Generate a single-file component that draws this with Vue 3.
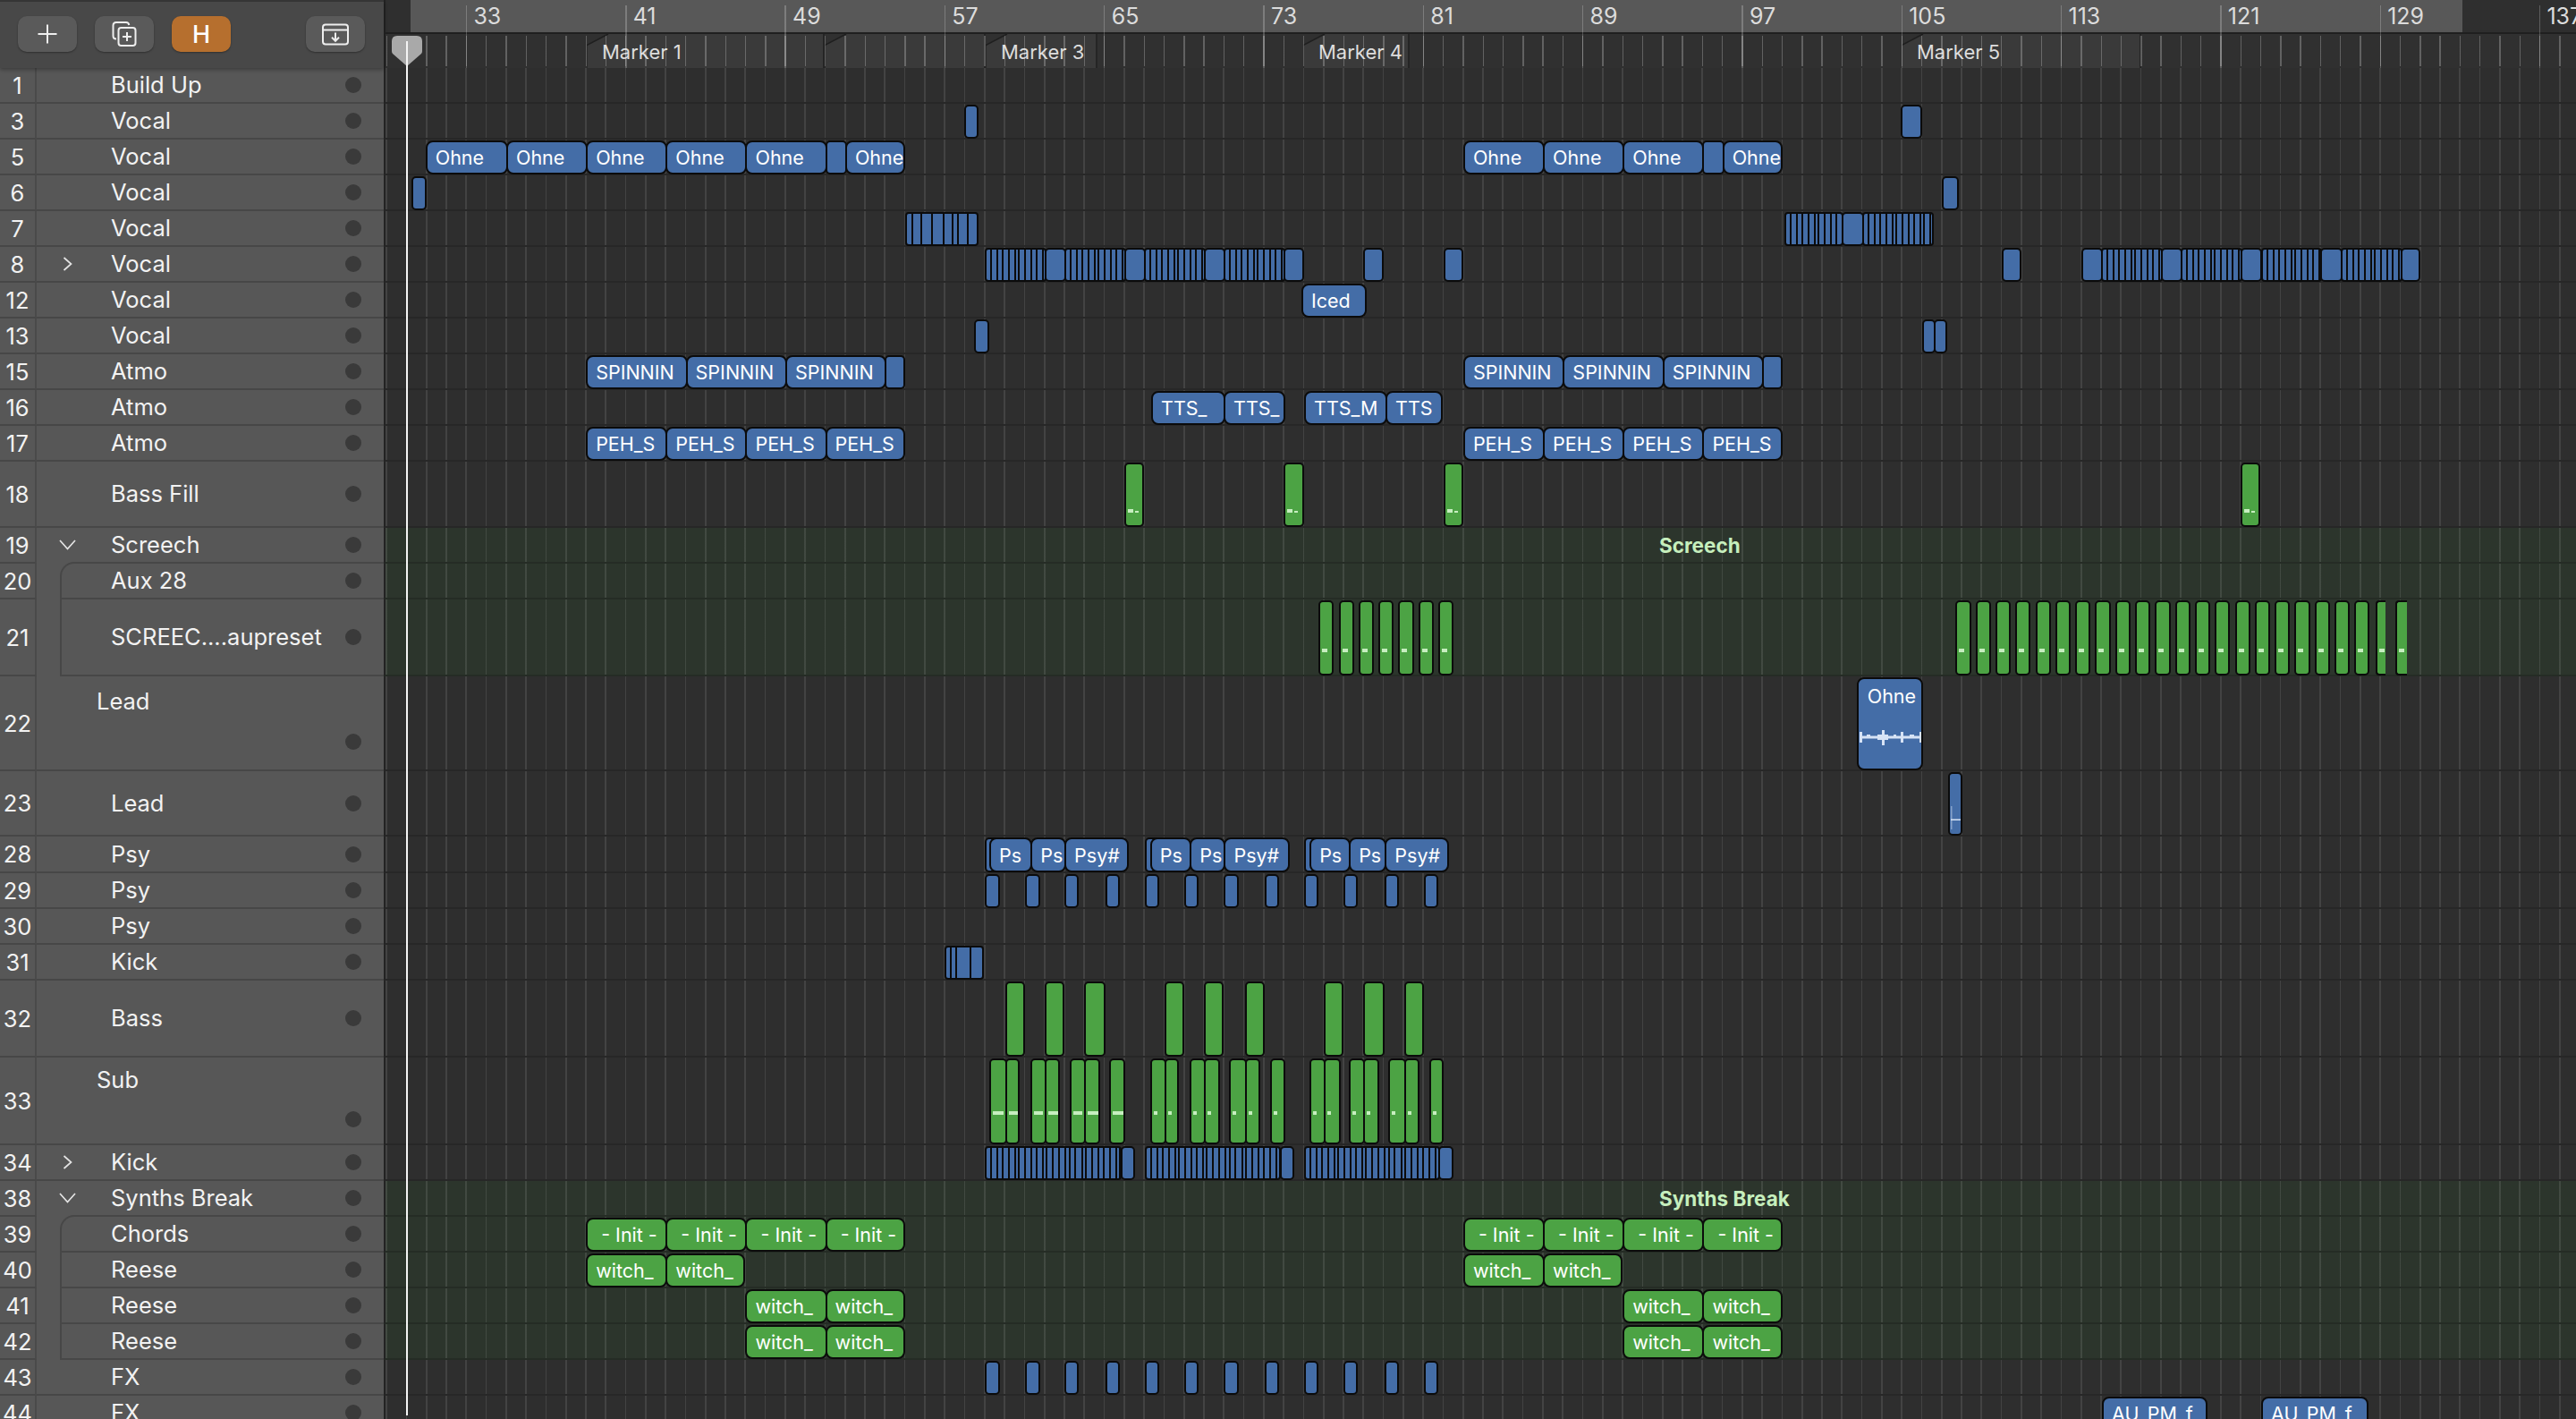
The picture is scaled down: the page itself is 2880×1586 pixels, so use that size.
<script setup>
const ORIGIN = 431
const B = (b) => 521.4 + (b - 33) * 22.29
const Z = (v) => 1060 + v / 2.613
const GAPS = [6, 5, 6, 6, 3, 6, 6, 5, 6, 3, 6, 6, 6, 4, 5, 7, 3, 6]

const linesFor = (w) => {
  const out = []
  let p = 4
  let i = 0
  while (p < w - 3) {
    out.push(p)
    p += GAPS[i % GAPS.length] + 1
    i++
  }
  return out
}
const blue = (b0, b1, t) => ({ x0: B(b0), x1: B(b1), c: 'blue', t })
const green = (b0, b1, t) => ({ x0: B(b0), x1: B(b1), c: 'green', t })
const bluePx = (x0, x1, t) => ({ x0, x1, c: 'blue', t })
const stripes = (x0, x1, lines) => ({ x0, x1, c: 'blue', lines: lines || linesFor(x1 - x0) })
const stripeBars = (b0, b1) => stripes(B(b0), B(b1))
const seq = (fn, stops, t) => stops.slice(0, -1).map((s, i) => fn(s, stops[i + 1], t))
const zBlocks = (pairs, c) => pairs.map(([a, b]) => ({ x0: Z(a), x1: Z(b), c }))
const ticked = (r, top, width, dbl) => ({ ...r, tick: { top, width, dbl } })

const small = [[108, 152], [224, 268], [339, 382], [459, 502], [574, 617], [689, 732], [804, 848], [925, 968], [1040, 1083], [1155, 1198], [1275, 1318], [1390, 1433]]
const subLong = [[120, 167], [167, 210], [240, 283], [283, 326], [355, 398], [398, 445], [470, 518]]
const subShort = [[590, 633], [633, 675], [705, 748], [748, 795], [820, 868], [868, 911], [941, 984], [1055, 1098], [1098, 1146], [1170, 1213], [1213, 1260], [1285, 1333], [1333, 1376], [1405, 1448]]

const rawRows = [
  { n: 1, name: 'Build Up', h: 40, regs: [] },
  { n: 3, name: 'Vocal', h: 40, regs: [bluePx(1078, 1094), bluePx(2125, 2149)] },
  { n: 5, name: 'Vocal', h: 40, regs: [...seq(blue, [30.95, 35, 39, 43, 47, 51], 'Ohne'), blue(51, 52), blue(52, 55, 'Ohne'), ...seq(blue, [83, 87, 91, 95], 'Ohne'), blue(95, 96), blue(96, 99, 'Ohne')] },
  { n: 6, name: 'Vocal', h: 40, regs: [bluePx(460, 476.5), bluePx(2171, 2190)] },
  { n: 7, name: 'Vocal', h: 40, regs: [stripes(1012, 1094, [5, 15, 27, 40, 50, 56, 67]), stripes(1995, 2059), bluePx(2059, 2082), stripes(2082, 2162)] },
  { n: 8, name: 'Vocal', chev: 'r', h: 40, regs: [
    stripeBars(59, 62), blue(62, 63), stripeBars(63, 66), blue(66, 67), stripeBars(67, 70), blue(70, 71), stripeBars(71, 74), blue(74, 75),
    blue(78, 79), blue(82, 83), blue(110, 111),
    blue(114, 115), stripeBars(115, 118), blue(118, 119), stripeBars(119, 122), blue(122, 123), stripeBars(123, 126), blue(126, 127), stripeBars(127, 130), blue(130, 131)
  ] },
  { n: 12, name: 'Vocal', h: 40, regs: [bluePx(1455, 1528, 'Iced')] },
  { n: 13, name: 'Vocal', h: 40, regs: [bluePx(1089, 1106), bluePx(2149, 2162), bluePx(2162, 2177)] },
  { n: 15, name: 'Atmo', h: 40, regs: [...seq(blue, [39, 44, 49, 54], 'SPINNIN'), blue(54, 55), ...seq(blue, [83, 88, 93, 98], 'SPINNIN'), blue(98, 99)] },
  { n: 16, name: 'Atmo', h: 40, regs: [bluePx(1287, 1368, 'TTS_'), bluePx(1368, 1437, 'TTS_'), bluePx(1458, 1549, 'TTS_M'), bluePx(1549, 1613, 'TTS')] },
  { n: 17, name: 'Atmo', h: 40, regs: [...seq(blue, [39, 43, 47, 51, 55], 'PEH_S'), ...seq(blue, [83, 87, 91, 95, 99], 'PEH_S')] },
  { n: 18, name: 'Bass Fill', h: 74, regs: [66, 74, 82, 122].map((b) => ticked(green(b, b + 1), 50, 6, true)) },
  { n: 19, name: 'Screech', chev: 'd', group: true, band: true, label: 'Screech', h: 40, regs: [] },
  { n: 20, name: 'Aux 28', child: true, first: true, band: true, h: 40, regs: [] },
  { n: 21, name: 'SCREEC....aupreset', child: true, last: true, band: true, h: 86, regs: [
    ...Array.from({ length: 7 }, (_, i) => ticked(green(75.75 + i, 76.52 + i), 52, 6)),
    ...Array.from({ length: 21 }, (_, i) => ticked(green(107.7 + i, 108.47 + i), 52, 6)),
    { x0: 2655.6, x1: 2665, c: 'green', open: true, tick: { top: 52, width: 6 } },
    { x0: 2677.5, x1: 2691, c: 'green', open: true, tick: { top: 52, width: 6 } }
  ] },
  { n: 22, name: 'Lead', split: 'split-a', h: 106, regs: [{ x0: 2075.7, x1: 2150, c: 'blue', t: 'Ohne', tall: true, wave: true }] },
  { n: 23, name: 'Lead', h: 73, regs: [{ x0: 2177.5, x1: 2194, c: 'blue', note: true }] },
  { n: 28, name: 'Psy', h: 41, regs: [
    bluePx(1101, 1120), bluePx(Z(120), Z(241), 'Ps'), bluePx(Z(241), Z(340), 'Ps'), bluePx(Z(340), Z(528), 'Psy#'),
    bluePx(1280, 1300), bluePx(Z(590), Z(706), 'Ps'), bluePx(Z(706), Z(806), 'Ps'), bluePx(Z(806), Z(998), 'Psy#'),
    bluePx(1458, 1478), bluePx(Z(1056), Z(1171), 'Ps'), bluePx(Z(1171), Z(1276), 'Ps'), bluePx(Z(1276), Z(1464), 'Psy#')
  ] },
  { n: 29, name: 'Psy', h: 40, regs: zBlocks(small, 'blue') },
  { n: 30, name: 'Psy', h: 40, regs: [] },
  { n: 31, name: 'Kick', h: 40, regs: [stripes(1056, 1100, [4, 10, 26])] },
  { n: 32, name: 'Bass', h: 86, regs: zBlocks([[167, 225], [282, 340], [397, 460], [632, 690], [748, 805], [867, 926], [1098, 1155], [1213, 1276], [1333, 1390]], 'green') },
  { n: 33, name: 'Sub', split: 'split-b', h: 98, regs: [
    ...zBlocks(subLong, 'green').map((r) => ticked(r, 57, Math.min(r.x1 - r.x0 - 6, 14))),
    ...zBlocks(subShort, 'green').map((r) => ticked(r, 57, 4))
  ] },
  { n: 34, name: 'Kick', chev: 'r', h: 40, regs: [stripes(1101.3, 1253), bluePx(1252.5, 1268.6), stripes(1279.7, 1431), bluePx(1430.5, 1446.5), stripes(1458, 1609), bluePx(1608.4, 1625)] },
  { n: 38, name: 'Synths Break', chev: 'd', group: true, band: true, label: 'Synths Break', h: 40, regs: [] },
  { n: 39, name: 'Chords', child: true, first: true, band: true, h: 40, regs: [...seq(green, [39, 43, 47, 51, 55], '\u00a0- Init -'), ...seq(green, [83, 87, 91, 95, 99], '\u00a0- Init -')] },
  { n: 40, name: 'Reese', child: true, band: true, h: 40, regs: [...seq(green, [39, 43, 47], 'witch_'), ...seq(green, [83, 87, 91], 'witch_')] },
  { n: 41, name: 'Reese', child: true, band: true, h: 40, regs: [...seq(green, [47, 51, 55], 'witch_'), ...seq(green, [91, 95, 99], 'witch_')] },
  { n: 42, name: 'Reese', child: true, last: true, band: true, h: 40, regs: [...seq(green, [47, 51, 55], 'witch_'), ...seq(green, [91, 95, 99], 'witch_')] },
  { n: 43, name: 'FX', h: 40, regs: zBlocks(small, 'blue') },
  { n: 44, name: 'FX', h: 40, regs: [bluePx(2350, 2468, 'AU_PM_f'), bluePx(2528, 2647.5, 'AU_PM_f')] }
]

// Touching regions share one outline: each one runs under the border of the next.
const rows = rawRows.map((row) => ({
  ...row,
  regs: row.regs.map((r, i) => {
    const next = row.regs[i + 1]
    return next && Math.abs(next.x0 - r.x1) <= 1 ? { ...r, x1: next.x0 + 2 } : r
  })
}))

const regStyle = (r) => {
  const style = { left: `${r.x0 - ORIGIN}px`, width: `${r.x1 - r.x0}px` }
  if (r.lines) {
    const stops = r.lines.flatMap((p) => [`transparent ${p}px`, `#0b0b0b ${p}px`, `#0b0b0b ${p + 1.7}px`, `transparent ${p + 1.7}px`])
    style.backgroundImage = `linear-gradient(90deg, ${stops.join(', ')})`
  }
  return style
}
const regClass = (r) => [
  r.c,
  { texted: !!r.t, tall: r.tall, striped: !!r.lines, open: r.open }
]

const bars = Array.from({ length: 14 }, (_, i) => 33 + i * 8)
const markers = [
  { x0: 656, x1: 922, t: 'Marker 1' },
  { x0: 922, x1: 1102, t: '' },
  { x0: 1102, x1: 1227, t: 'Marker 3' },
  { x0: 1457, x1: 1576, t: 'Marker 4' },
  { x0: 2126, x1: 2394, t: 'Marker 5' }
]
const markerStyle = (m) => ({ left: `${m.x0 - ORIGIN}px`, width: `${m.x1 - m.x0}px` })
</script>

<template>
  <div class="app">
    <header class="top">
      <div class="toolbar">
        <button class="tbtn">
          <svg width="30" height="30" viewBox="0 0 30 30"><path d="M15 4.500v21M4.500 15h21" /></svg>
        </button>
        <button class="tbtn">
          <svg width="34" height="34" viewBox="0 0 34 34">
            <path d="M8 22.500c-2 0-3.500-1.300-3.500-3.500V7.500C4.500 5.300 6 4 8 4h11c2 0 3 1 3.300 3" />
            <rect x="10.500" y="10" width="19" height="20" rx="3" />
            <path d="M20 15v10M15 20h10" />
          </svg>
        </button>
        <button class="tbtn orange">H</button>
        <button class="tbtn push">
          <svg width="34" height="30" viewBox="0 0 34 30">
            <rect x="3" y="4.500" width="28" height="22" rx="3" />
            <path d="M3 10.500h28M17 13.500v9M13 18.800l4 4 4-4" />
          </svg>
        </button>
      </div>
      <div class="timeline">
        <div class="ruler">
          <span v-for="b in bars" :key="b" class="barnum">{{ b }}</span>
        </div>
        <div class="mlane">
          <div v-for="m in markers" :key="m.x0" class="marker" :style="markerStyle(m)">
            <svg class="notch" width="26" height="14" viewBox="0 0 26 14">
              <path class="notch-fill" d="M0 0H24L0 12Z" />
              <path class="notch-line" d="M0 12.500L24 0" />
            </svg>
            <span>{{ m.t }}</span>
          </div>
          <div class="ticks"></div>
        </div>
      </div>
    </header>

    <main class="rows">
      <div v-for="row in rows" :key="row.n" class="row" :style="{ height: row.h + 'px' }">
        <div class="head" :class="row.split">
          <div class="num">{{ row.n }}</div>
          <div class="body" :class="{ child: row.child, first: row.first, last: row.last, group: row.group }">
            <svg v-if="row.chev" class="chev" width="19" height="16" viewBox="0 0 19 16">
              <path v-if="row.chev === 'r'" d="M5.500 1l8 7-8 7" />
              <path v-else d="M1 3l8.500 9.500L18 3" />
            </svg>
            <span class="name">{{ row.name }}</span>
            <i class="dot"></i>
          </div>
        </div>
        <div class="lane" :class="{ band: row.band }">
          <span v-if="row.label" class="glabel">{{ row.label }}</span>
          <div v-for="(r, i) in row.regs" :key="i" class="reg" :class="regClass(r)" :style="regStyle(r)">
            <span v-if="r.t" class="rname">{{ r.t }}</span>
            <i v-if="r.tick" class="tick" :class="{ dbl: r.tick.dbl }" :style="{ top: r.tick.top + 'px', width: r.tick.width + 'px' }"></i>
            <svg v-if="r.wave" class="wave" width="70" height="20" viewBox="0 0 70 20">
              <path d="M0 8.500h70v3H0zM0 4h3v12H0zM25 2h3v17h-3zM46 4h3v12h-3zM67 4h3v12h-3zM20 7h12v6H20zM8 7h4v3H8zM38 7h3v3h-3zM56 7h5v3h-5z" />
            </svg>
            <svg v-if="r.note" class="notemark" width="14" height="30" viewBox="0 0 14 30">
              <path d="M1 0h1.500v26H1z" opacity=".45" />
              <path d="M1 14.500h12v1.500H1z" />
            </svg>
          </div>
        </div>
      </div>
    </main>

    <div class="playhead">
      <svg class="phead" width="34" height="34" viewBox="0 0 34 34">
        <path d="M6 0H28Q34 0 34 6V17Q34 19 33 20L17 34L1 20Q0 19 0 17V6Q0 0 6 0Z" />
      </svg>
      <div class="pline"></div>
    </div>
  </div>
</template>

<style scoped>
.app {
  position: relative;
  width: 2880px;
  height: 1586px;
  overflow: hidden;
  background: #2e2e2e;
  font-family: Inter, "Liberation Sans", sans-serif;
  color: #f2f2f2;
}
.top {
  display: flex;
  height: 76px;
}
.toolbar {
  display: flex;
  width: 429px;
  flex: none;
  gap: 20px;
  box-sizing: border-box;
  padding: 16px 21px 0 20px;
  background: #484848;
  border-top: 2px solid #353535;
  box-shadow: 0 2px 4px rgba(0, 0, 0, 0.3);
  position: relative;
  z-index: 2;
}
.tbtn {
  width: 66px;
  height: 40px;
  padding: 0;
  border: 0;
  border-radius: 10px;
  background: #5a5a5a;
  box-shadow: 0 1px 2px rgba(0, 0, 0, 0.35);
  display: flex;
  align-items: center;
  justify-content: center;
  color: #fff;
  font: 500 27px Inter, sans-serif;
}
.tbtn svg {
  fill: none;
  stroke: #eeeeee;
  stroke-width: 2;
}
.orange {
  background: #b66f2e;
}
.push {
  margin-left: auto;
}
.timeline {
  flex: 1;
  position: relative;
  border-left: 2px solid #232323;
  min-width: 0;
  overflow: hidden;
}
.timeline::after {
  content: "";
  position: absolute;
  inset: 6px 0 0 0;
  pointer-events: none;
  z-index: 3;
  background: repeating-linear-gradient(90deg, transparent 0 89.7px, rgba(255, 255, 255, 0.22) 89.7px 91.2px, transparent 91.2px 178.32px);
}
.ruler {
  height: 38px;
  box-sizing: border-box;
  padding: 3px 0 0 89.4px;
  display: flex;
  border-bottom: 2px solid #222222;
  background: linear-gradient(90deg, #2f2f2f 0 28px, #585858 28px 2322px, #2f2f2f 2322px);
}
.barnum {
  flex: 0 0 178.32px;
  padding-left: 9px;
  box-sizing: border-box;
  font-size: 25px;
  line-height: 30px;
  color: #dcdcdc;
}
.mlane {
  position: relative;
  height: 38px;
  background: #303030;
  box-shadow: 0 2px 5px rgba(0, 0, 0, 0.45);
  z-index: 2;
}
.marker {
  position: absolute;
  top: 0;
  bottom: 0;
  box-sizing: border-box;
  background: #3a3a3a;
  border-right: 2px solid #252525;
  border-left: 1px solid #2a2a2a;
  padding: 7px 0 0 16px;
  font-size: 22px;
  line-height: 26px;
  color: #dddddd;
  white-space: nowrap;
}
.notch {
  position: absolute;
  left: -1px;
  top: 0;
}
.notch-fill {
  fill: #303030;
}
.notch-line {
  stroke: #1f1f1f;
  stroke-width: 1.500;
  fill: none;
}
.ticks {
  position: absolute;
  inset: 2px 0 2px 0;
  background: repeating-linear-gradient(90deg, transparent 0 0.6px, rgba(255, 255, 255, 0.24) 0.6px 2px, transparent 2px 22.29px);
}
.rows {
  display: flex;
  flex-direction: column;
}
.row {
  display: flex;
  flex: none;
}
.head {
  width: 429px;
  flex: none;
  display: flex;
  background: #575757;
  font-size: 25.500px;
}
.num {
  width: 41px;
  flex: none;
  box-sizing: border-box;
  border-right: 2px solid #4a4a4a;
  border-bottom: 2px solid #474747;
  display: flex;
  align-items: center;
  justify-content: center;
}
.body {
  position: relative;
  flex: 1;
  min-width: 0;
  box-sizing: border-box;
  display: flex;
  align-items: center;
  padding: 0 25px 0 83px;
  border-bottom: 2px solid #474747;
}
.body.group {
  border-bottom-color: transparent;
}
.body.child {
  margin-left: 26px;
  padding-left: 55px;
  border-left: 2px solid #474747;
}
.body.first {
  margin-top: -2px;
  border-top: 2px solid #474747;
  border-top-left-radius: 16px;
}
.split-a .body,
.split-b .body {
  align-items: flex-start;
  padding-left: 67px;
}
.split-a .name {
  margin-top: 13px;
}
.split-a .dot {
  margin-top: 64px;
}
.split-b .name {
  margin-top: 10px;
}
.split-b .dot {
  margin-top: 60px;
}
.chev {
  position: absolute;
  left: 25px;
  top: calc(50% - 8px);
  fill: none;
  stroke: #e4e4e4;
  stroke-width: 1.700;
}
.name {
  line-height: 30px;
  white-space: nowrap;
}
.dot {
  margin-left: auto;
  width: 18px;
  height: 18px;
  flex: none;
  border-radius: 50%;
  background: #3a3a3a;
}
.lane {
  position: relative;
  flex: 1;
  box-sizing: border-box;
  border-left: 2px solid #232323;
  border-bottom: 2px solid #272727;
  background: repeating-linear-gradient(90deg, transparent 0 0.24px, rgba(255, 255, 255, 0.1) 0.24px 1.94px, transparent 1.94px 22.29px);
}
.band {
  background-color: #2c352c;
  border-bottom-color: #252c25;
}
.glabel {
  position: absolute;
  left: 1424px;
  top: 0;
  bottom: 0;
  display: flex;
  align-items: center;
  font-size: 22.500px;
  font-weight: 700;
  color: #c6efbd;
  white-space: nowrap;
}
.reg {
  position: absolute;
  top: 1px;
  bottom: -1px;
  box-sizing: border-box;
  border: 2px solid #0b0b0b;
  border-radius: 5px;
  overflow: hidden;
  display: flex;
  align-items: center;
  padding-left: 9px;
}
.blue {
  background-color: #446da7;
}
.green {
  background-color: #4ca344;
}
.texted {
  border-radius: 8px;
}
.striped {
  border-radius: 4px;
}
.open {
  border-right: 0;
  border-radius: 4px 0 0 4px;
}
.tall {
  align-items: flex-start;
  padding-left: 10px;
}
.tall .rname {
  margin-top: 5px;
}
.rname {
  font-size: 21.500px;
  line-height: 28px;
  color: #ffffff;
  white-space: nowrap;
}
.tick {
  position: absolute;
  left: 2px;
  height: 4px;
  background: #c7eec0;
}
.tick.dbl {
  box-shadow: 7px 1px 0 -1px #c7eec0;
}
.wave {
  position: absolute;
  left: 1px;
  top: 55px;
  fill: #d7e3f5;
}
.notemark {
  position: absolute;
  left: 0;
  top: 36px;
  fill: #d7e3f5;
}
.playhead {
  position: absolute;
  left: 438px;
  top: 40px;
  bottom: 4px;
  width: 34px;
  z-index: 5;
  pointer-events: none;
}
.phead {
  display: block;
  fill: #a9a9a9;
}
.pline {
  position: absolute;
  left: 16px;
  top: 6px;
  bottom: 0;
  width: 2px;
  background: #f4f4f4;
}
</style>

<style>
html, body {
  margin: 0;
  background: #2e2e2e;
  overflow: hidden;
}
</style>
